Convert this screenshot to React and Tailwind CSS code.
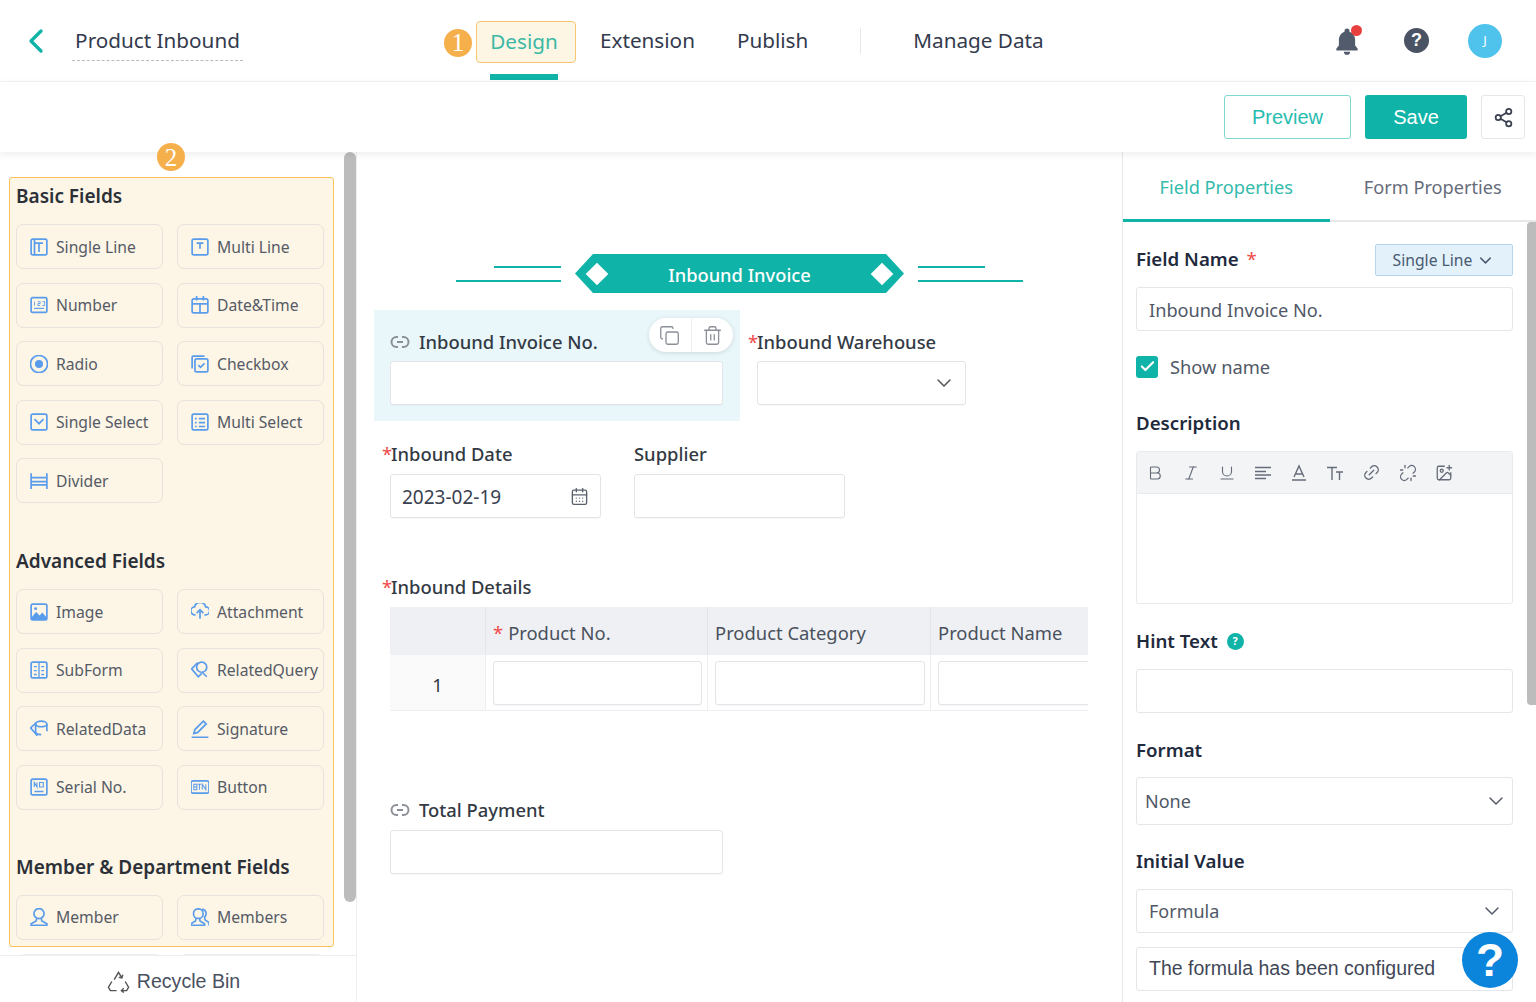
import { ChevronDown, ChevronLeft, Bold, Italic, Underline, Link2, Unlink, ImagePlus, Copy, Trash2, CalendarDays, Share2, Check } from 'lucide-react';

const ICON = 'h-[18px] w-[18px] text-[#5a9cec]';

// small field-type glyphs, all on a 18x18 box
function FieldIcon({ name }) {
  const p = { fill: 'none', stroke: 'currentColor', strokeWidth: 1.5 };
  return (
    <svg viewBox="1 1 16 16" className={`${ICON} shrink-0`}>
      {name === 'single' && <><rect x="2" y="2" width="14" height="14" rx="1.5" {...p} /><path d="M5.5 5.5h7M9 5.5v8M5 2v14" {...p} /></>}
      {name === 'multi' && <><rect x="2" y="2" width="14" height="14" rx="1.5" {...p} /><path d="M6 5.5h6M9 5.5v5" {...p} /></>}
      {name === 'number' && <><rect x="2" y="2.5" width="14" height="13" rx="1.5" {...p} /><path d="M4.5 12h9" {...p} strokeWidth="1" /><path d="M5 6v3.5M8 6h2v1.7H8v1.8h2M12 6h2v3.5h-2" {...p} strokeWidth=".8" /></>}
      {name === 'date' && <><rect x="2" y="3.5" width="14" height="12.5" rx="1.5" {...p} /><path d="M6 1v4M12 1v4M2 8h14M9 8v8" {...p} /></>}
      {name === 'radio' && <><circle cx="9" cy="9" r="7.6" {...p} /><circle cx="9" cy="9" r="3.6" fill="currentColor" /></>}
      {name === 'checkbox' && <><path d="M2 13V3a1 1 0 0 1 1-1h10" {...p} /><rect x="4.5" y="4.5" width="11.5" height="11.5" rx="1.5" {...p} /><path d="M7.5 10l2 2 3.5-3.5" {...p} /></>}
      {name === 'select' && <><rect x="2" y="2" width="14" height="14" rx="1.5" {...p} /><path d="M5 6.5l4 4 4-4" {...p} /></>}
      {name === 'mselect' && <><rect x="2" y="2" width="14" height="14" rx="1.5" {...p} /><path d="M8 6h5.5M8 9.5h5.5M8 13h5.5M4.5 6h1.5M4.5 9.5h1.5M4.5 13h1.5" {...p} /></>}
      {name === 'divider' && <path d="M2 2v14M16 2v14M2 6h14M2 9.5h14M2 12.500h14" {...p} />}
      {name === 'image' && <><rect x="2" y="2" width="14" height="14" rx="1.5" fill="currentColor" fillOpacity=".2" {...p} /><path d="M2 14l4.500-5 3 3 2.500-2.500 4 4.500v1.500H2z" fill="currentColor" /><circle cx="6" cy="6" r="1.300" fill="currentColor" /></>}
      {name === 'attach' && <path d="M5 11.500H4.500a3.500 3.500 0 0 1-.3-7A5 5 0 0 1 14 4.500a3.500 3.500 0 0 1 0 7h-1M9 15V7M6 10l3-3 3 3" {...p} />}
      {name === 'subform' && <><rect x="2" y="2" width="14" height="14" rx="1.500" {...p} /><path d="M9 2v14M4.500 6h2.500M4.500 9.500h2.500M4.500 13h2.500M11 6h2.500M11 9.500h2.500M11 13h2.500" {...p} strokeWidth="1.200" /></>}
      {name === 'query' && <><circle cx="10.500" cy="6.500" r="4.500" {...p} /><path d="M7 2.500L1.500 8l6 7 3-3M11 11l4 4" {...p} /></>}
      {name === 'rdata' && <><ellipse cx="11" cy="4.500" rx="5" ry="2.500" {...p} /><path d="M6 4.500v7c0 1.400 2.200 2.500 5 2.500M16 4.500V11M7 3L1.500 8l6 7" {...p} /></>}
      {name === 'signature' && <path d="M1.500 16.500h15M3.500 13l1-3.500L12 2l2.500 2.500L7 12z" {...p} />}
      {name === 'serial' && <><rect x="2" y="2" width="14" height="14" rx="1.500" {...p} /><path d="M5 13h8" {...p} /><path d="M4.800 9V5l2.400 4V5M9.500 5h3.300v4H9.500z" {...p} strokeWidth="1" /></>}
      {name === 'button' && <><rect x="1" y="3.500" width="16" height="11" rx="2" {...p} /><path d="M3.500 6.500h2.700v5H3.500zM3.500 9h2.700M7 6.500h3M8.500 6.500v5M11 11.500v-5l3.200 5v-5" {...p} strokeWidth=".9" /></>}
      {name === 'member' && <><circle cx="9" cy="6" r="4.500" {...p} /><path d="M7 10l-.5 2.500L2 15v1.500h14V15l-4.500-2.500L11 10" {...p} /></>}
      {name === 'members' && <><circle cx="7.500" cy="6" r="4.300" {...p} /><path d="M5.500 10l-.5 2.500L1 15v1.500h12V15l-4-2.500L8.500 10M11 2a4 4 0 0 1 2 7l.5 2.500 3.500 2.500v2.500" {...p} /></>}
    </svg>
  );
}

function FieldCard({ icon, label }) {
  return (
    <div className="flex h-[45px] items-center gap-[8px] rounded-[7px] border border-[#e6e3dc] pl-[13px] text-[15.700px] whitespace-nowrap text-[#555b66]">
      <FieldIcon name={icon} />
      <span className="mt-[2px]">{label}</span>
    </div>
  );
}

function SectionTitle({ children, className = '' }) {
  return <h3 className={`text-[19px] leading-[26px] font-semibold text-[#2b3038] ${className}`}>{children}</h3>;
}

const basicFields = [
  ['single', 'Single Line'], ['multi', 'Multi Line'], ['number', 'Number'], ['date', 'Date&Time'],
  ['radio', 'Radio'], ['checkbox', 'Checkbox'], ['select', 'Single Select'], ['mselect', 'Multi Select'], ['divider', 'Divider'],
];
const advancedFields = [
  ['image', 'Image'], ['attach', 'Attachment'], ['subform', 'SubForm'], ['query', 'RelatedQuery'],
  ['rdata', 'RelatedData'], ['signature', 'Signature'], ['serial', 'Serial No.'], ['button', 'Button'],
];

function FieldGrid({ items }) {
  return (
    <div className="grid grid-cols-[147px_147px] gap-x-[14px] gap-y-[13.500px]">
      {items.map(([icon, label]) => <FieldCard key={label} icon={icon} label={label} />)}
    </div>
  );
}

function NumberBadge({ n, className = '' }) {
  return (
    <span className={`flex h-[28px] w-[28px] items-center justify-center rounded-full bg-[#f5b04c] font-['Liberation_Serif',serif] text-[25px] leading-none text-white ${className}`}>{n}</span>
  );
}

function Header() {
  return (
    <div className="relative flex h-[82px] shrink-0 items-center border-b border-[#f5f5f5] bg-white font-['Noto_Sans',sans-serif] text-[20.700px] text-[#333a4d]">
      <ChevronLeft className="ml-[16px] h-[40px] w-[40px] text-[#10b3a7]" strokeWidth={2} />
      <div className="ml-[16px] flex h-[40px] w-[171px] items-start justify-center border-b border-dashed border-[#bbb] leading-[38px] whitespace-nowrap">Product Inbound</div>
      <NumberBadge n="1" className="mt-[4px] ml-[201px]" />
      <div className="relative mt-[2px] ml-[4px] flex h-[42px] w-[100px] items-center justify-center rounded-[4px] border border-[#f8c66f] bg-[#fdf6e5] pr-[4px] text-[#3bb8a3]">
        Design
        <span className="absolute top-[52px] left-[13px] h-[6px] w-[68px] bg-[#10b3a7]" />
      </div>
      <span className="ml-[24px]">Extension</span>
      <span className="ml-[42px]">Publish</span>
      <span className="ml-[52px] h-[26px] w-px bg-[#e8e8e8]" />
      <span className="ml-[52px]">Manage Data</span>
      <div className="ml-auto flex items-center">
        <div className="relative">
          <svg viewBox="0 0 24 24" className="h-[30px] w-[30px] text-[#525b6b]" fill="currentColor">
            <path d="M12 2a2 2 0 0 0-2 2v.5C7 5.500 5.500 8 5.500 11v4.500L3.500 18v1.500h17V18l-2-2.500V11c0-3-1.500-5.500-4.500-6.500V4a2 2 0 0 0-2-2zM9.500 20.500a2.500 2.500 0 0 0 5 0z" />
          </svg>
          <span className="absolute -top-[1px] right-[0px] h-[11px] w-[11px] rounded-full bg-[#ea3f3f]" />
        </div>
        <span className="ml-[42px] flex h-[25px] w-[25px] items-center justify-center rounded-full bg-[#4a5364] font-['Liberation_Sans',sans-serif] text-[18px] font-bold text-white">?</span>
        <span className="mr-[34px] ml-[39px] flex h-[34px] w-[34px] items-center justify-center rounded-full bg-[#4fc3ec] text-[13px] text-white">J</span>
      </div>
    </div>
  );
}

function Toolbar() {
  return (
    <div className="relative z-10 flex h-[70px] shrink-0 items-center justify-end bg-white pr-[11px] font-['Liberation_Sans',sans-serif] text-[20px] shadow-[0_2px_8px_rgba(0,0,0,0.08)]">
      <button className="h-[44px] w-[127px] rounded-[3px] border border-[#7fd8d0] text-[#26bcb0]">Preview</button>
      <button className="ml-[14px] h-[44px] w-[102px] rounded-[3px] bg-[#10b3a7] text-white">Save</button>
      <button className="ml-[14px] flex h-[44px] w-[44px] items-center justify-center rounded-[3px] border border-[#e6e6e6] text-[#3a4150]">
        <Share2 className="h-[21px] w-[21px]" strokeWidth={2} />
      </button>
    </div>
  );
}

function LeftPanel() {
  return (
    <aside className="relative flex w-[357px] shrink-0 flex-col border-r border-[#eee] font-['Noto_Sans',sans-serif]">
      <div className="flex-1 overflow-hidden pt-[25px] pl-[9px]">
        <div className="h-[770px] w-[325px] overflow-hidden rounded-[3px] border border-[#f9c25c] bg-[#fdf5e5] pt-[5px] pl-[6px]">
          <SectionTitle>Basic Fields</SectionTitle>
          <div className="mt-[15px]"><FieldGrid items={basicFields} /></div>
          <SectionTitle className="mt-[45px]">Advanced Fields</SectionTitle>
          <div className="mt-[15px]"><FieldGrid items={advancedFields} /></div>
          <SectionTitle className="mt-[44px]">Member & Department Fields</SectionTitle>
          <div className="mt-[15px]"><FieldGrid items={[['member', 'Member'], ['members', 'Members']]} /></div>
        </div>
        <div className="mt-[7px] ml-[9px] grid grid-cols-[145px_145px] gap-x-[16px]">
          <div className="h-[20px] rounded-[7px] border border-[#eee]" />
          <div className="h-[20px] rounded-[7px] border border-[#eee]" />
        </div>
      </div>
      <div className="flex h-[47px] shrink-0 items-center justify-center gap-[7px] border-t border-[#eee] bg-white pt-[5px] pr-[9px] font-['Liberation_Sans',sans-serif] text-[19.600px] text-[#4a5060]">
        <svg viewBox="0 0 24 24" className="h-[23px] w-[23px] text-[#555]" fill="none" stroke="currentColor" strokeWidth="1.500">
          <path d="M7.500 10L12 2.500 15.500 8M16.500 5l-1 3.200-3.200-.6M19 12l3.500 6-2 3.500H15M17.500 19l-2.500 2.500 2.500 2M5 12l-3.500 6 2 3.500H10" />
        </svg>
        Recycle Bin
      </div>
      <NumberBadge n="2" className="absolute top-[-9px] left-[157px] z-20" />
      <span className="absolute top-0 right-0 h-[750px] w-[12px] rounded-full bg-[#bcbcbc]" />
    </aside>
  );
}

function Box({ className = '', children }) {
  return <div className={`h-[44px] rounded-[3px] border border-[#e2e4e8] bg-white shadow-[0_1px_1px_rgba(0,0,0,0.03)] ${className}`}>{children}</div>;
}

function LinkIcon() {
  return (
    <svg viewBox="0 0 20 20" className="h-[20px] w-[20px] text-[#8a8f98]" fill="none" stroke="currentColor" strokeWidth="2">
      <path d="M8 5H6.500a5 5 0 0 0 0 10H8M12 5h1.500a5 5 0 0 1 0 10H12M7 10h6" />
    </svg>
  );
}

function Label({ req, children, className = '' }) {
  return (
    <div className={`text-[18.400px] leading-[26px] font-medium text-[#333a44] ${className}`}>
      {req && <span className="absolute -ml-[9px] font-normal text-[#f04a4a]">*</span>}
      {children}
    </div>
  );
}

function Banner() {
  return (
    <div className="flex items-center pl-[99px]">
      <div className="flex w-[105px] flex-col items-end gap-[12px]">
        <span className="h-[2px] w-[67px] bg-[#10b3a7]" />
        <span className="h-[2px] w-[105px] bg-[#10b3a7]" />
      </div>
      <div className="mx-[14px] flex h-[39px] w-[329px] items-center justify-between bg-[#10b3a7] px-[14px] text-[18.300px] font-medium text-white [clip-path:polygon(18px_0,311px_0,100%_50%,311px_100%,18px_100%,0_50%)]">
        <span className="h-[16px] w-[16px] rotate-45 bg-white" />
        <span className="mt-[2px]">Inbound Invoice</span>
        <span className="h-[16px] w-[16px] rotate-45 bg-white" />
      </div>
      <div className="flex w-[105px] flex-col items-start gap-[12px]">
        <span className="h-[2px] w-[67px] bg-[#10b3a7]" />
        <span className="h-[2px] w-[105px] bg-[#10b3a7]" />
      </div>
    </div>
  );
}

function DetailsTable() {
  return (
    <div className="ml-[33px] h-[104px] w-[698px] overflow-hidden text-[18.400px] text-[#4a505c]">
      <div className="grid h-[48px] grid-cols-[95px_222px_223px_158px] bg-[#eef0f4] leading-[52px]">
        <span />
        <span className="border-l border-[#e3e5ea] pl-[7px]"><span className="mr-[5px] text-[#f04a4a]">*</span>Product No.</span>
        <span className="border-l border-[#e3e5ea] pl-[7px]">Product Category</span>
        <span className="border-l border-[#e3e5ea] pl-[7px]">Product Name</span>
      </div>
      <div className="grid h-[56px] grid-cols-[95px_222px_223px_158px] border-b border-[#eceef1]">
        <span className="flex items-center justify-center bg-[#fafafa] pt-[4px] text-[#333a44]">1</span>
        <div className="border-l border-[#eceef1] pt-[6px] pr-[5px] pl-[7px]"><Box /></div>
        <div className="border-l border-[#eceef1] pt-[6px] pr-[5px] pl-[7px]"><Box /></div>
        <div className="-mr-[10px] border-l border-[#eceef1] pt-[6px] pl-[7px]"><Box /></div>
      </div>
    </div>
  );
}

function Canvas() {
  return (
    <main className="min-w-0 flex-1 overflow-hidden pt-[102px] font-['Noto_Sans',sans-serif]">
      <Banner />
      <div className="mt-[17px] flex items-start pl-[17px]">
        <div className="relative h-[111px] w-[366px] bg-[#e9f6fa] pt-[19px] pl-[16px]">
          <Label className="flex items-center gap-[9px]"><LinkIcon />Inbound Invoice No.</Label>
          <Box className="mt-[6px] w-[333px]" />
          <div className="absolute top-[8px] right-[7px] flex h-[34px] w-[84px] items-center rounded-full bg-white text-[#8a8f98] shadow-[0_1px_5px_rgba(0,0,0,0.12)]">
            <span className="flex h-full flex-1 items-center justify-center border-r border-[#eee]"><Copy className="h-[21px] w-[21px]" strokeWidth={1.500} /></span>
            <span className="flex h-full flex-1 items-center justify-center"><Trash2 className="h-[21px] w-[21px]" strokeWidth={1.500} /></span>
          </div>
        </div>
        <div className="ml-[17px] pt-[19px]">
          <Label req>Inbound Warehouse</Label>
          <Box className="mt-[6px] flex w-[209px] items-center justify-end pr-[9px]">
            <ChevronDown className="h-[24px] w-[24px] text-[#555]" strokeWidth={1.500} />
          </Box>
        </div>
      </div>
      <div className="mt-[20px] flex pl-[33px]">
        <div className="w-[211px]">
          <Label req className="pl-px">Inbound Date</Label>
          <Box className="mt-[7px] flex items-center justify-between pr-[11px] pl-[11px] text-[19px] text-[#3a4150]">
            <span className="mt-[2px]">2023-02-19</span>
            <CalendarDays className="h-[19px] w-[19px] text-[#5a606c]" strokeWidth={1.700} />
          </Box>
        </div>
        <div className="ml-[33px] w-[211px]">
          <Label>Supplier</Label>
          <Box className="mt-[7px]" />
        </div>
      </div>
      <div className="mt-[56px] pl-[34px]"><Label req>Inbound Details</Label></div>
      <div className="mt-[7px]"><DetailsTable /></div>
      <div className="mt-[86px] pl-[33px]">
        <Label className="flex items-center gap-[9px]"><LinkIcon />Total Payment</Label>
        <Box className="mt-[7px] w-[333px]" />
      </div>
    </main>
  );
}

function PropLabel({ className = '', children }) {
  return <div className={`text-[18.700px] leading-[26px] font-semibold text-[#1f2a3d] ${className}`}>{children}</div>;
}

function Select({ value, className = '', pad = 'pl-[12px]' }) {
  return (
    <div className={`flex items-center justify-between rounded-[3px] border border-[#e4e6ea] text-[18px] text-[#505866] ${pad} ${className}`}>
      <span className="mt-[1px]">{value}</span>
      <ChevronDown className="h-[24px] w-[24px] text-[#555c68]" strokeWidth={1.500} />
    </div>
  );
}

function Property() {
  return (
    <aside className="relative w-[414px] shrink-0 overflow-hidden border-l border-[#e8e8e8] font-['Noto_Sans',sans-serif]">
      <div className="flex h-[70px] border-b-2 border-[#e8e8e8] text-[18.200px] leading-[71px]">
        <div className="relative h-[70px] w-[209px] border-b-[3px] border-[#10b3a7] text-center text-[#33bbac]">Field Properties</div>
        <div className="w-[209px] text-center text-[#666c7a]">Form Properties</div>
      </div>
      <div className="ml-[13px] w-[377px] pt-[22px]">
        <div className="flex h-[32px] items-center justify-between">
          <PropLabel className="-mt-[3px]">Field Name <span className="ml-[3px] font-normal text-[#f04a4a]">*</span></PropLabel>
          <div className="flex h-[32px] w-[138px] items-center justify-center gap-[4px] rounded-[2px] border border-[#b5d6ef] bg-[#e3f1fb] text-[15.700px] text-[#4a5a70]">
            <span className="mt-[1px]">Single Line</span> <ChevronDown className="h-[19px] w-[19px]" strokeWidth={1.800} />
          </div>
        </div>
        <div className="mt-[11px] flex h-[44px] items-center rounded-[3px] border border-[#e4e6ea] pl-[12px] text-[18.200px] text-[#505866]"><span className="mt-[3px]">Inbound Invoice No.</span></div>
        <div className="mt-[24px] flex items-center gap-[12px] text-[18.300px] leading-[22px] text-[#505866]">
          <span className="flex h-[22px] w-[22px] items-center justify-center rounded-[3px] bg-[#10b3a7]"><Check className="h-[17px] w-[17px] text-white" strokeWidth={3} /></span>
          <span className="mt-[1px]">Show name</span>
        </div>
        <PropLabel className="mt-[32px]">Description</PropLabel>
        <div className="mt-[15px] h-[153px] rounded-[3px] border border-[#e8eaed]">
          <div className="flex h-[42px] items-center gap-[18px] border-b border-[#e8eaed] bg-[#f3f4f6] pl-[9px] text-[#656b78]">
            <Bold className="h-[18px] w-[18px]" strokeWidth={1.500} />
            <Italic className="h-[18px] w-[18px]" strokeWidth={1.500} />
            <Underline className="h-[18px] w-[18px]" strokeWidth={1.500} />
            <svg viewBox="0 0 18 18" className="h-[18px] w-[18px]" fill="none" stroke="currentColor" strokeWidth="1.300"><path d="M1 3.500h16M1 7.500h11M1 11h16M1 14.500h11" /></svg>
            <svg viewBox="0 0 18 18" className="h-[18px] w-[18px]" fill="none" stroke="currentColor" strokeWidth="1.400"><path d="M4 13L9 2l5 11M5.500 10h7M2 16h14" /></svg>
            <svg viewBox="0 0 18 18" className="h-[18px] w-[18px]" fill="none" stroke="currentColor" strokeWidth="1.400"><path d="M1 3.500h10M6 3.500V16M10 8h7M13.500 8v8" /></svg>
            <Link2 className="h-[19px] w-[19px] -rotate-45" strokeWidth={1.700} />
            <Unlink className="h-[18px] w-[18px]" strokeWidth={1.700} />
            <ImagePlus className="h-[18px] w-[18px]" strokeWidth={1.700} />
          </div>
        </div>
        <div className="mt-[24px] flex h-[26px] items-center gap-[9px]">
          <PropLabel>Hint Text</PropLabel>
          <span className="flex h-[17px] w-[17px] items-center justify-center rounded-full bg-[#10b3a7] text-[11px] font-bold text-white">?</span>
        </div>
        <div className="mt-[15px] h-[44px] rounded-[3px] border border-[#e4e6ea]" />
        <PropLabel className="mt-[24px]">Format</PropLabel>
        <Select value="None" pad="pl-[8px] pr-[4px]" className="mt-[14px] h-[48px] text-[18.500px] text-[#6b7280]" />
        <PropLabel className="mt-[23px]">Initial Value</PropLabel>
        <Select value="Formula" pad="pl-[12px] pr-[8px]" className="mt-[15px] h-[44px]" />
        <div className="mt-[14px] flex h-[44px] items-center rounded-[3px] border border-[#e4e6ea] pl-[12px] font-['Liberation_Sans',sans-serif] text-[19.500px] text-[#3f4757]">The formula has been configured</div>
      </div>
      <span className="absolute top-[70px] right-0 h-[483px] w-[9px] rounded-l-[4px] bg-[#bcbcbc]" />
      <span className="absolute top-[780px] right-[18px] flex h-[56px] w-[56px] items-center justify-center rounded-full bg-[#0b84dc] font-['Liberation_Sans',sans-serif] text-[46px] font-bold text-white">?</span>
    </aside>
  );
}

export default function App() {
  return (
    <div className="flex h-[1002px] w-[1536px] flex-col overflow-hidden bg-white">
      <Header />
      <Toolbar />
      <div className="flex min-h-0 flex-1">
        <LeftPanel />
        <Canvas />
        <Property />
      </div>
    </div>
  );
}
